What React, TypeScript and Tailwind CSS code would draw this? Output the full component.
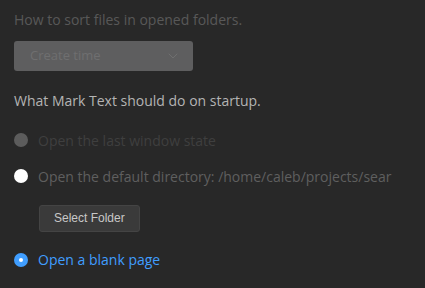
import { ChevronDown } from 'lucide-react';

const font = { fontFamily: '"Open Sans", sans-serif' };

function Radio({ state }: { state: 'disabled' | 'off' | 'on' }) {
  if (state === 'on') {
    return (
      <span className="flex size-[14px] shrink-0 items-center justify-center rounded-full bg-[#409eff]">
        <span className="size-1 rounded-full bg-white" />
      </span>
    );
  }
  return (
    <span
      className={
        state === 'disabled'
          ? 'size-[14px] shrink-0 rounded-full bg-[#5c5c5c]'
          : 'size-[14px] shrink-0 rounded-full bg-white'
      }
    />
  );
}

export default function App() {
  return (
    <div className="h-[288px] w-[425px] overflow-hidden bg-[#282828] px-[14px] pt-[10px]" style={font}>
      <p className="text-[14px] leading-[20px] text-[#585858]">How to sort files in opened folders.</p>
      <div className="mt-[11px] flex h-[30px] w-[179px] items-center justify-between rounded-[3px] bg-[#5e5e5f] pl-[16px] pr-[12px]">
        <span className="text-[13px] text-[#6f6f70]">Create time</span>
        <ChevronDown className="size-4 text-[#737374]" strokeWidth={1.2} />
      </div>

      <p className="mt-[20px] text-[14px] leading-[20px] text-[#b4b4b4]">What Mark Text should do on startup.</p>

      <div className="mt-[19px] flex flex-col">
        <label className="flex h-[20px] items-center gap-[10px]">
          <Radio state="disabled" />
          <span className="text-[14px] text-[#3f3f3f]">Open the last window state</span>
        </label>
        <label className="mt-[16px] flex h-[20px] items-center gap-[10px]">
          <Radio state="off" />
          <span className="whitespace-nowrap text-[14px] text-[#5f5f5f]">
            Open the default directory: /home/caleb/projects/sear
          </span>
        </label>
        <div className="mt-[18px] pl-[25px]">
          <button
            className="h-[27px] rounded-[3px] border border-[#444] bg-[#3a3a3a] px-[14px] text-[12px] text-[#c8c8c8]"
            style={{ fontFamily: '"Liberation Sans", Arial, sans-serif' }}
          >
            Select Folder
          </button>
        </div>
        <label className="mt-[18px] flex h-[20px] items-center gap-[10px]">
          <Radio state="on" />
          <span className="text-[14px] text-[#409eff]">Open a blank page</span>
        </label>
      </div>
    </div>
  );
}
